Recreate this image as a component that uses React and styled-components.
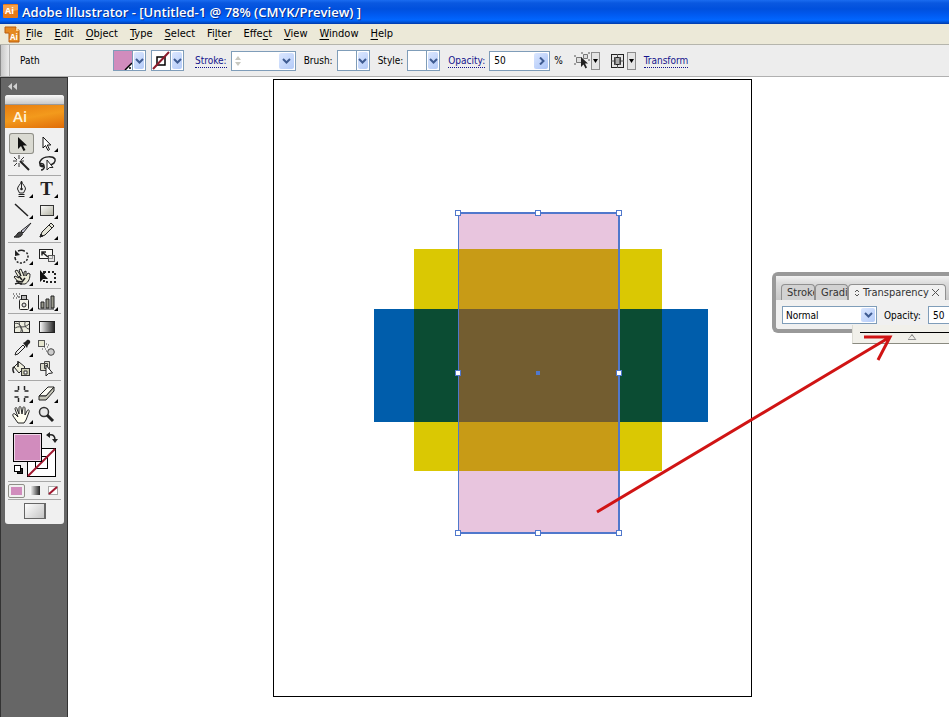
import React, {useState} from 'react';
import styled, {createGlobalStyle} from 'styled-components';

const GlobalStyle = createGlobalStyle`
  * {
    box-sizing: border-box;
  }
  body {
    margin: 0;
    background: #fff;
    color: #000;
    font-family: "DejaVu Sans Condensed", "DejaVu Sans", Tahoma, sans-serif;
    font-size: 11px;
  }
  button, input, select {
    font: inherit;
    color: inherit;
    margin: 0;
    padding: 0;
    border: 0;
    border-radius: 0;
    background: transparent;
  }
  svg {
    display: block;
    flex: none;
  }
`
const AppWindow = styled.div`
  display: flex;
  flex-direction: column;
  min-height: 100vh;
  overflow: hidden;
`
const TitleBar = styled.header`
  display: flex;
  align-items: center;
  gap: 4px;
  height: 24px;
  padding-left: 3px;
  background: linear-gradient(#1a6cf0 0, #0a58e0 3px, #0050dd 9px, #0058ee 14px, #0166ff 20px, #0054d8 22px, #0038a8 24px);
`
const TitleText = styled.h1`
  margin: 0;
  font-family: "Open Sans", sans-serif;
  font-size: 13px;
  line-height: 20px;
  font-weight: 600;
  color: #fff;
  text-shadow: 1px 1px #0a2f8c;
  white-space: pre;
`
const MenuBar = styled.nav`
  display: flex;
  align-items: center;
  height: 20px;
  padding-left: 4px;
  background: #ece9d8;
`
const MenuItem = styled.button`
  padding: 0 6px;
  line-height: 18px;

  u {
    text-underline-offset: 2px;
  }
`
const ControlBar = styled.div`
  display: flex;
  align-items: center;
  height: 33px;
  border-top: 1px solid #b5b5ac;
  border-bottom: 1px solid #b0b0b0;
  background: #ededed;
  font-size: 10px;
  white-space: nowrap;
`
const Gripper = styled.div`
  align-self: stretch;
  width: 10px;
  margin-right: 10px;
  border-left: 1px solid #8a8a8a;
  border-right: 1px solid #b4b4b4;
  background: linear-gradient(90deg, #c8c8c8, #ececec);
`
const ObjectKind = styled.span`
  width: 93px;
`
const ControlGroup = styled.div`
  display: flex;
  align-items: center;
  gap: ${p => p.$gap || 4}px;
  margin-right: ${p => p.$space || 8}px;
`
const PanelLink = styled.a`
  color: #14148c;
  text-decoration: none;
  border-bottom: 1px dotted #14148c;
  line-height: 13px;
`
const Field = styled.span`
  display: flex;
  flex: none;
  align-items: stretch;
  width: ${p => p.$width}px;
  height: ${p => p.$height || 20}px;
  border: 1px solid #7f9db9;
  background: #fff;
`
const FieldSelect = styled.select`
  flex: 1;
  min-width: 0;
  padding-left: 3px;
  appearance: none;
  outline: none;
`
const FieldInput = styled.input`
  flex: 1;
  min-width: 0;
  padding-left: 4px;
  outline: none;
`
const SwatchButton = styled.button`
  display: flex;
  width: 33px;
  height: 21px;
  border: 1px solid #7f9db9;
  background: #fff;
`
const SwatchFace = styled.span`
  flex: 1;
  border-right: 1px solid #7f9db9;
`
const ArrowFace = styled.span`
  display: flex;
  align-items: center;
  justify-content: center;
  width: ${p => p.$width || 12}px;
  margin: 1px;
  border-radius: 2px;
  background: linear-gradient(135deg, #dbe7ff, #b4cbf8);
  pointer-events: none;
`
const StepButton = styled.button`
  display: flex;
  align-items: center;
  justify-content: center;
  width: 14px;
  margin: 1px;
  border-radius: 2px;
  background: linear-gradient(135deg, #dbe7ff, #a9c3f7);
`
const IconMenu = styled.button`
  display: flex;
  align-items: center;
  gap: 1px;
`
const DropMark = styled.span`
  display: flex;
  align-items: center;
  justify-content: center;
  width: 9px;
  height: 18px;
  border: 1px solid #8c8c8c;
  background: #e4e4e4;
`
const Workspace = styled.div`
  display: flex;
  flex: 1;
`
const ToolDock = styled.aside`
  width: 68px;
  flex: none;
  padding: 0 3px 0 4px;
  border: 1px solid #333;
  border-bottom: 0;
  background: #666;
`
const CollapseButton = styled.button`
  display: flex;
  align-items: center;
  width: 100%;
  height: 17px;
  padding-left: 3px;
`
const ToolPanel = styled.div`
  border-radius: 3px;
  background: #f0f0f0;
  overflow: hidden;
`
const PanelHandle = styled.div`
  height: 10px;
  background: linear-gradient(#fafafa, #c9c9c9);
  border-bottom: 1px solid #999;
`
const Brand = styled.div`
  height: 23px;
  padding-left: 8px;
  background: linear-gradient(170deg, #e87d10, #f39a1c 50%, #e06c08);
  color: #fff4dc;
  font-family: "Open Sans", sans-serif;
  font-size: 15px;
  font-weight: 600;
  line-height: 22px;
`
const ToolGroup = styled.div`
  display: grid;
  grid-template-columns: 25px 25px;
  grid-auto-rows: 21px;
  margin: 0 3px;
  padding: ${p => p.$first ? '5px 0 0 1px' : '3px 0 0 1px'};
  border-bottom: 1px solid #a8a8a8;
`
const ToolButton = styled.button`
  height: 21px;
  border-radius: 3px;
  background: ${p => p.$active ? '#dadad2' : 'transparent'};
  box-shadow: ${p => p.$active ? 'inset 0 0 0 1px #8f8f88' : 'none'};
`
const ColorArea = styled.div`
  margin: 0 3px;
  border-bottom: 1px solid #a8a8a8;
`
const ModeRow = styled.div`
  display: flex;
  align-items: center;
  gap: 1px;
  height: 18px;
  margin: 0 3px;
  border-bottom: 1px solid #a8a8a8;
`
const ModeButton = styled.button`
  display: flex;
  align-items: center;
  justify-content: center;
  width: 17px;
  height: 14px;
  border: 1px solid ${p => p.$active ? '#8f8f88' : 'transparent'};
  border-radius: 2px;
`
const ScreenRow = styled.div`
  display: flex;
  justify-content: center;
  height: 24px;
  padding-top: 3px;
`
const ScreenButton = styled.button`
  width: 22px;
  height: 16px;
  border: 1px solid #666;
  border-right-width: 2px;
  background: linear-gradient(135deg, #fff, #c4c4c4);
`
const Canvas = styled.main`
  position: relative;
  flex: 1;
  min-width: 0;
  padding: 2px 0 20px 205px;
  background: #fff;
  border-bottom: 1px solid #dedcd0;
`
const Artboard = styled.section`
  width: 479px;
  border: 1px solid #000;
`
const FloatingPanel = styled.section`
  position: absolute;
  left: 704px;
  right: 0;
  top: 195px;
  border: 4px solid #999;
  border-right: 0;
  border-radius: 6px 0 0 6px;
  background: #f0f0f0;
`
const TabStrip = styled.div`
  display: flex;
  height: 24px;
  padding: 8px 0 0 5px;
  background: linear-gradient(#f2f2f2 0, #dcdcdc 7px, #c8c8c8);
  overflow: hidden;
`
const Tab = styled.button`
  display: flex;
  align-items: center;
  flex: none;
  gap: 3px;
  width: ${p => p.$width}px;
  padding-left: 5px;
  border: 1px solid #909090;
  border-bottom: 0;
  border-radius: 4px 4px 0 0;
  background: ${p => p.$active ? '#f0f0f0' : '#d2d2d2'};
  color: #333;
  overflow: hidden;
  white-space: nowrap;
`
const PanelBody = styled.div`
  display: flex;
  align-items: center;
  gap: 7px;
  height: 29px;
  padding: 1px 0 0 6px;
  font-size: 10px;
  overflow: hidden;
  white-space: nowrap;
`
const SliderPopup = styled.div`
  position: absolute;
  left: 784px;
  right: 0;
  top: 248px;
  height: 19px;
  padding: 7px 0 0 7px;
  border-bottom: 1px solid #8a8a80;
  border-left: 1px solid #dcdcd4;
  background: #f1f0ea;
  overflow: hidden;
`
const Slider = styled.input`
  display: block;
  width: 104px;
  height: 9px;
  appearance: none;
  border-top: 1px solid #000;
  outline: none;

  &::-webkit-slider-thumb {
    appearance: none;
    width: 9px;
    height: 6px;
    background: linear-gradient(#555, #999);
    clip-path: polygon(50% 0, 100% 100%, 0 100%, 12% 84%, 82% 84%, 50% 22%, 12% 84%, 0 100%);
  }
`
const Pointer = styled.svg`
  position: absolute;
  left: 528px;
  top: 254px;
  pointer-events: none;
`

const Chevron = ({right}) => (
    <svg width="9" height="8" viewBox="0 0 9 8" fill="none" stroke="#3f5c92" strokeWidth="2">
        <path d={right ? 'M3 0.5l3.5 3.5L3 7.5' : 'M1 2l3.5 3.5L8 2'}/>
    </svg>
)

const DownMark = () => (
    <DropMark>
        <svg width="5" height="4" viewBox="0 0 5 4"><path d="M0 0h5L2.5 4z"/></svg>
    </DropMark>
)

const AppIcon = () => (
    <svg width="15" height="18" viewBox="0 0 15 18">
        <rect y="1" width="15" height="14" rx="1" fill="#e87a18"/>
        <path d="M0 2h15v5L0 10z" fill="#f6a04a"/>
        <text x="2" y="11" fill="#fff" fontSize="9" fontWeight="700" fontFamily="Open Sans">Ai</text>
    </svg>
)

const DocIcon = () => (
    <svg width="16" height="17" viewBox="0 0 16 17">
        <path d="M1 1h11v3h3v12H5V7H1z" fill="#e58a22" stroke="#b95d0c"/>
        <path d="M12 1v4h3z" fill="#ffd18a"/>
        <text x="6" y="14" fill="#fff" fontSize="8" fontWeight="700" fontFamily="Open Sans">Ai</text>
    </svg>
)

// every tool glyph is drawn on a 25 x 21 grid
const glyphs = {
    selection: <path d="M9 4v12l3-3 2.500 5 2-1-2.500-4.500h4z" fill="#111"/>,
    direct: <path d="M9 4v11l2.500-2.500 2.500 5 1.500-1-2.200-4.500h3.500z" fill="#fff" stroke="#111"/>,
    wand: <>
        <path d="M11 7l9 9" stroke="#222" strokeWidth="2"/>
        <path d="M10 1v4M10 9v4M4 7h4M12 7h3M5 3l3 3M15 3l-3 3M5 12l3-3" stroke="#333"/>
    </>,
    lasso: <>
        <path d="M10 12c-5 0-5-4-3-6 3-4 12-4 14-1 1 3-2 6-6 6M10 12c0-3-4-3-4-1s3 2 4 1c1 2-1 4-3 4" fill="none" stroke="#222" strokeWidth="1.500"/>
        <path d="M13 6v10l2.500-2.500H19z" fill="#fff" stroke="#222"/>
    </>,
    pen: <>
        <path d="M12.500 2c-1 4-4 5-4 8l2 4h4l2-4c0-3-3-4-4-8z" fill="#eee" stroke="#222"/>
        <path d="M12.500 3v6M9.500 15.500h6M9.500 17.500h6" stroke="#222"/>
        <circle cx="12.500" cy="10" r="1.300" fill="#222"/>
    </>,
    type: <text x="12.500" y="16" textAnchor="middle" fontFamily="Liberation Serif" fontSize="19" fontWeight="700" fill="#222">T</text>,
    line: <path d="M6 4l13 12" stroke="#222" strokeWidth="1.500"/>,
    rect: <rect x="6.500" y="5.500" width="13" height="10" fill="url(#shine)" stroke="#333"/>,
    brush: <>
        <path d="M22 2L12 10l2 2z" fill="#ccd" stroke="#222"/>
        <path d="M5 16c3-1 3-5 6-5 3 0 3 3 1 4-2 2-5 1-7 1z" fill="#444" stroke="#222"/>
    </>,
    pencil: <>
        <path d="M6 16l2-5L17 2l3 3-9 9z" fill="#e6e6d8" stroke="#222"/>
        <path d="M6 16l1-3 2 2zM15 4l3 3" fill="#222" stroke="#222"/>
    </>,
    rotate: <>
        <path d="M9 5c5-2 10 1 10 5s-3 7-7 7-6-3-6-6" fill="none" stroke="#222" strokeWidth="1.500" strokeDasharray="7 2 2 1.500 2 1.500 2 1.500 2 1.500 2 1.500 2 1.500"/>
        <path d="M6 4v6l5-1z" fill="#222"/>
    </>,
    scale: <>
        <rect x="5.500" y="3.500" width="13" height="9" fill="#f8f8f4" stroke="#222"/>
        <rect x="14.500" y="9.500" width="6" height="6" fill="#ddd" fillOpacity="0.600" stroke="#555"/>
        <path d="M8 6l6 5M8 9.500V6h4" fill="none" stroke="#222" strokeWidth="1.500"/>
    </>,
    warp: <>
        <path d="M8 3l4 6-2-6 2-1 3 7 0-4 2-1 0 5 2-3 2 1c0 4-1 8-5 10h-5l-6-7 1-1 4 2-4-7z" fill="#ecebd8" stroke="#222"/>
        <path d="M6 17l3-1 4 1M7 14l6 1 3-4M10 9l3 4" fill="none" stroke="#222" strokeWidth="1.500"/>
    </>,
    free: <>
        <rect x="10" y="5" width="11" height="10" fill="none" stroke="#222" strokeWidth="2" strokeDasharray="2 2"/>
        <path d="M6 3v12l3-3h5z" fill="#111"/>
    </>,
    spray: <>
        <rect x="10.500" y="7.500" width="9" height="10" rx="1" fill="#f3f3ea" stroke="#222"/>
        <rect x="12.500" y="3.500" width="5" height="4" fill="#bbb" stroke="#222"/>
        <circle cx="15" cy="13" r="2" fill="#ddd" stroke="#222"/>
        <path d="M4 2h1M7 2h1M10 2h1M5 4h1M8 4h1M4 6h1M7 6h1M9 5h2" stroke="#222"/>
    </>,
    graph: <>
        <path d="M4.500 3v14H20" fill="none" stroke="#222"/>
        <path d="M7 10h3v6H7zM12 7h3v9h-3zM17 4h3v12h-3z" fill="#99998c" stroke="#222"/>
    </>,
    mesh: <>
        <rect x="5.500" y="4.500" width="15" height="11" fill="#ededdf" stroke="#222"/>
        <path d="M5 12c5-5 9 1 15-5M11 4c-3 4 4 7 0 12M5 7c4-2 7 0 9 9M17 4c-3 3 0 8 3 8" fill="none" stroke="#444"/>
    </>,
    gradient: <rect x="5.500" y="4.500" width="15" height="11" fill="url(#fade)" stroke="#222"/>,
    dropper: <>
        <path d="M6 17l1-3 7-7 2 2-7 7z" fill="#eee" stroke="#222"/>
        <path d="M14 5l2-1 2-2c2-1 4 1 3 3l-2 2-1 3z" fill="#222"/>
    </>,
    blend: <>
        <rect x="4.500" y="2.500" width="6" height="6" fill="#e6e6cf" stroke="#555"/>
        <path d="M12 6h1M10 9h1M13 9h1M8 11h1M11 11h1M14 7h1M12 13h1" stroke="#444"/>
        <circle cx="17" cy="14" r="3.300" fill="#ccc" stroke="#444"/>
    </>,
    bucket: <>
        <path d="M5 8l5-5 6 5-6 6z" fill="#eeeedd" stroke="#222"/>
        <path d="M9 2v6M5 8c-2 1-1 4 0 6" fill="none" stroke="#222" strokeWidth="1.500"/>
        <rect x="12.500" y="9.500" width="8" height="7" fill="#ccccb4" stroke="#333"/>
        <path d="M15 12h3v3h-3z" fill="#fff" stroke="#333"/>
    </>,
    liveSelect: <>
        <path d="M6.500 4.500h7v7h-7zM10.500 2.500h5v7h-5z" fill="#d9d9cc" stroke="#444"/>
        <path d="M12 6v11l2.500-2.500 4-.5z" fill="#fff" stroke="#222"/>
    </>,
    slice: <path d="M9.500 2v5H5M15.500 2v5H20M9.500 18v-5H5M15.500 18v-5H20" fill="none" stroke="#222" strokeWidth="1.500" strokeDasharray="4 1"/>,
    eraser: <>
        <path d="M5 12l9-9h6l-8 9z" fill="#fafaf2" stroke="#222"/>
        <path d="M5 12h7l8-9v4l-8 9H5z" fill="#c6c6b8" stroke="#222"/>
    </>,
    hand: <path d="M9 18l-5-7c-1-2 1-3 2-2l3 3-3-8c0-2 2-2 2 0l2 5V3c0-2 2-2 2 0l1 6 1-6c0-2 2-1 2 0v7l2-4c1-2 3-1 2 1l-3 8-2 3z" fill="#fffef0" stroke="#222"/>,
    zoom: <>
        <circle cx="10" cy="7" r="4.500" fill="#e8e8e8" stroke="#333" strokeWidth="1.500"/>
        <path d="M13 10l6 6" stroke="#222" strokeWidth="3"/>
    </>,
}

const toolGroups = [
    [['selection'], ['direct', 1], ['wand'], ['lasso']],
    [['pen', 1], ['type', 1], ['line', 1], ['rect', 1], ['brush'], ['pencil', 1]],
    [['rotate', 1], ['scale', 1], ['warp', 1], ['free']],
    [['spray', 1], ['graph', 1]],
    [['mesh'], ['gradient'], ['dropper', 1], ['blend'], ['bucket'], ['liveSelect']],
    [['slice', 1], ['eraser', 1], ['hand', 1], ['zoom']],
]

const menus = [
    ['', 'F', 'ile'], ['', 'E', 'dit'], ['', 'O', 'bject'], ['', 'T', 'ype'], ['', 'S', 'elect'],
    ['Fi', 'l', 'ter'], ['Effe', 'c', 't'], ['', 'V', 'iew'], ['', 'W', 'indow'], ['', 'H', 'elp'],
]

// selection box handles, in artboard coordinates
const handles = [[184, 133], [264, 133], [345, 133], [184, 293], [345, 293], [184, 453], [264, 453], [345, 453]]

function Toolbox() {
    const [tool, setTool] = useState('selection');
    return (
        <ToolDock>
            <CollapseButton aria-label="Collapse">
                <svg width="10" height="7" viewBox="0 0 10 7" fill="#d0d0d0"><path d="M4 0v7L0 3.500zM9 0v7L5 3.500z"/></svg>
            </CollapseButton>
            <ToolPanel>
                <PanelHandle/>
                <Brand>Ai</Brand>
                {toolGroups.map((group, i) => (
                    <ToolGroup key={i} $first={i === 0}>
                        {group.map(([name, more]) => (
                            <ToolButton key={name} aria-label={name} $active={tool === name} onClick={() => setTool(name)}>
                                <svg width="25" height="21" viewBox="0 0 25 21">
                                    <defs>
                                        <linearGradient id="shine" x2="1" y2="1">
                                            <stop stopColor="#fff"/>
                                            <stop offset="1" stopColor="#b0b0a0"/>
                                        </linearGradient>
                                        <linearGradient id="fade">
                                            <stop stopColor="#fff"/>
                                            <stop offset="1" stopColor="#222"/>
                                        </linearGradient>
                                    </defs>
                                    {glyphs[name]}
                                    {more && <path d="M24 15v4h-4z"/>}
                                </svg>
                            </ToolButton>
                        ))}
                    </ToolGroup>
                ))}
                <ColorArea>
                    <svg width="52" height="54" viewBox="0 0 52 54">
                        <rect x="19.500" y="21.500" width="28" height="28" fill="#fff" stroke="#000"/>
                        <rect x="27.500" y="29.500" width="12" height="12" fill="#fff" stroke="#000"/>
                        <path d="M20 49L47 22" stroke="#a01830" strokeWidth="2"/>
                        <rect x="5" y="6" width="29" height="29" fill="#fff"/>
                        <rect x="5.500" y="6.500" width="28" height="28" fill="#d18cbd" stroke="#000"/>
                        <rect x="6.500" y="7.500" width="26" height="26" fill="none" stroke="#f0d8e8"/>
                        <path d="M41 8c4-1 6 1 6 5" fill="none" stroke="#222" strokeWidth="1.500"/>
                        <path d="M42 5v6l-4-3zM44 12h6l-3 4z" fill="#222"/>
                        <rect x="9.500" y="41.500" width="5" height="5" fill="#222" stroke="#000"/>
                        <rect x="6.500" y="38.500" width="6" height="6" fill="#fff" stroke="#000"/>
                    </svg>
                </ColorArea>
                <ModeRow>
                    <ModeButton $active aria-label="Color">
                        <svg width="11" height="8"><rect width="11" height="8" fill="#d18cbd"/></svg>
                    </ModeButton>
                    <ModeButton aria-label="Gradient">
                        <svg width="10" height="9"><rect width="10" height="9" fill="url(#fade)"/></svg>
                    </ModeButton>
                    <ModeButton aria-label="None">
                        <svg width="10" height="9">
                            <rect x="0.500" y="0.500" width="9" height="8" fill="#fff" stroke="#aaa"/>
                            <path d="M1 8L9 1" stroke="#a01830" strokeWidth="2"/>
                        </svg>
                    </ModeButton>
                </ModeRow>
                <ScreenRow><ScreenButton aria-label="Screen mode"/></ScreenRow>
            </ToolPanel>
        </ToolDock>
    );
}

function Controls() {
    const [opacity, setOpacity] = useState('50');
    return (
        <ControlBar>
            <Gripper/>
            <ObjectKind>Path</ObjectKind>
            <ControlGroup $gap={5} $space={11}>
                <SwatchButton aria-label="Fill">
                    <SwatchFace>
                        <svg width="18" height="19" viewBox="0 0 18 19">
                            <rect width="18" height="19" fill="#d18cbd"/>
                            <path d="M18 12v7h-7z" fill="#fff"/>
                            <path d="M11 19l7-7M15 17h2" stroke="#000" strokeWidth="1.500"/>
                        </svg>
                    </SwatchFace>
                    <ArrowFace $width={10}><Chevron/></ArrowFace>
                </SwatchButton>
                <SwatchButton aria-label="Stroke color">
                    <SwatchFace>
                        <svg width="18" height="19" viewBox="0 0 18 19">
                            <rect x="5" y="6" width="8" height="8" fill="none" stroke="#000" strokeWidth="1.500"/>
                            <path d="M1 18L17 1" stroke="#8c1c2c" strokeWidth="2"/>
                        </svg>
                    </SwatchFace>
                    <ArrowFace $width={10}><Chevron/></ArrowFace>
                </SwatchButton>
            </ControlGroup>
            <ControlGroup>
                <PanelLink id="stroke-label" href="#stroke">Stroke:</PanelLink>
                <Field $width={65}>
                    <svg width="12" height="18" viewBox="0 0 12 18" fill="#c8c8c0"><path d="M3 8l3-4 3 4zM3 10h6l-3 4z"/></svg>
                    <FieldSelect aria-labelledby="stroke-label"><option/></FieldSelect>
                    <ArrowFace $width={15}><Chevron/></ArrowFace>
                </Field>
            </ControlGroup>
            <ControlGroup>
                <label htmlFor="brush">Brush:</label>
                <SwatchButton id="brush"><SwatchFace/><ArrowFace $width={10}><Chevron/></ArrowFace></SwatchButton>
            </ControlGroup>
            <ControlGroup>
                <label htmlFor="style">Style:</label>
                <SwatchButton id="style"><SwatchFace/><ArrowFace $width={10}><Chevron/></ArrowFace></SwatchButton>
            </ControlGroup>
            <ControlGroup $space={11}>
                <PanelLink id="opacity-label" href="#opacity">Opacity:</PanelLink>
                <Field $width={61}>
                    <FieldInput aria-labelledby="opacity-label" value={opacity} onChange={e => setOpacity(e.target.value)}/>
                    <StepButton aria-label="Open opacity slider"><Chevron right/></StepButton>
                </Field>
                <span>%</span>
            </ControlGroup>
            <ControlGroup $space={11}>
                <IconMenu aria-label="Select similar objects">
                    <svg width="16" height="17" viewBox="0 0 16 17">
                        <path d="M2.500 5.500h5v5h-5zM9.500 2.500h4v4h-4z" fill="#ddd" stroke="#777"/>
                        <path d="M0 4h2M0 12h2M7 1h2M14 1h2M14 8h2" stroke="#555"/>
                        <path d="M7 5v10l2.500-2.500 2 4 1.500-1-2-4h3z" fill="#222"/>
                    </svg>
                    <DownMark/>
                </IconMenu>
            </ControlGroup>
            <ControlGroup>
                <IconMenu aria-label="Align">
                    <svg width="15" height="16" viewBox="0 0 15 16">
                        <rect x="0.500" y="1.500" width="12" height="13" fill="#e4e4e4" stroke="#222"/>
                        <path d="M6.500 1v14M0 8h13M3.500 4v8M9.500 4v8" stroke="#555"/>
                        <rect x="4" y="4.500" width="5" height="7" rx="1" fill="#aaa" stroke="#222"/>
                    </svg>
                    <DownMark/>
                </IconMenu>
            </ControlGroup>
            <PanelLink href="#transform">Transform</PanelLink>
        </ControlBar>
    );
}

function Artwork() {
    return (
        <svg width="477" height="616" viewBox="0 0 477 616" shapeRendering="crispEdges">
            <rect x="100" y="229" width="334" height="113" fill="#005dab"/>
            <rect x="140" y="169" width="248" height="222" fill="#dac803"/>
            <rect x="140" y="229" width="248" height="113" fill="#0b4c33"/>
            <rect x="184" y="133" width="161" height="320" fill="#e8c5de"/>
            <rect x="184" y="169" width="161" height="222" fill="#c89b16"/>
            <rect x="184" y="229" width="161" height="113" fill="#735d30"/>
            <path d="M184.500 133v320" stroke="#5078cc"/>
            <path d="M184 133h161v320H184" fill="none" stroke="#5078cc" strokeWidth="2"/>
            {handles.map(([x, y]) => (
                <rect key={`${x}-${y}`} x={x - 2.5} y={y - 2.5} width="5" height="5" fill="#fff" stroke="#5078cc"/>
            ))}
            <rect x="262" y="291" width="4" height="4" fill="#5078cc"/>
        </svg>
    );
}

function TransparencyPanel() {
    const [opacity, setOpacity] = useState('50');
    return (
        <>
            <FloatingPanel>
                <TabStrip>
                    <Tab $width={34}>Stroke</Tab>
                    <Tab $width={33}>Gradient</Tab>
                    <Tab $width={98} $active>
                        <svg width="6" height="8" viewBox="0 0 6 8" fill="none" stroke="#555"><path d="M1 3l2-2 2 2M1 5l2 2 2-2"/></svg>
                        Transparency
                        <svg width="7" height="7" viewBox="0 0 7 7" stroke="#555"><path d="M0 0l7 7M7 0L0 7"/></svg>
                    </Tab>
                </TabStrip>
                <PanelBody>
                    <Field $width={95} $height={18}>
                        <FieldSelect aria-label="Blending mode"><option>Normal</option></FieldSelect>
                        <ArrowFace $width={14}><Chevron/></ArrowFace>
                    </Field>
                    <label htmlFor="panel-opacity">Opacity:</label>
                    <Field $width={61} $height={18}>
                        <FieldInput id="panel-opacity" value={opacity} onChange={e => setOpacity(e.target.value)}/>
                    </Field>
                </PanelBody>
            </FloatingPanel>
            <SliderPopup>
                <Slider type="range" aria-label="Opacity" value={opacity} onChange={e => setOpacity(e.target.value)}/>
            </SliderPopup>
        </>
    );
}

function App() {
    return (
        <>
            <GlobalStyle/>
            <AppWindow>
                <TitleBar>
                    <AppIcon/>
                    <TitleText>Adobe Illustrator - [Untitled-1 @ 78% (CMYK/Preview) ]</TitleText>
                </TitleBar>
                <MenuBar>
                    <DocIcon/>
                    {menus.map(([before, key, after]) => (
                        <MenuItem key={before + key + after}>{before}<u>{key}</u>{after}</MenuItem>
                    ))}
                </MenuBar>
                <Controls/>
                <Workspace>
                    <Toolbox/>
                    <Canvas>
                        <Artboard><Artwork/></Artboard>
                        <TransparencyPanel/>
                        <Pointer width="300" height="190" viewBox="0 0 300 190" fill="none" stroke="#d01414" strokeWidth="3">
                            <path d="M1 181L294 6M268 6h26l-12 23"/>
                        </Pointer>
                    </Canvas>
                </Workspace>
            </AppWindow>
        </>
    );
}

export default App;
